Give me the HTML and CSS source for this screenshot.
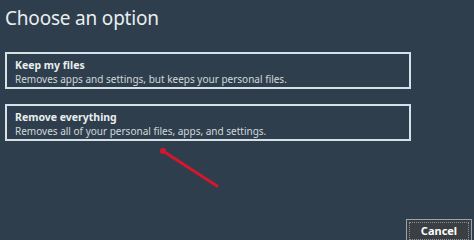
FILE: index.html
```html
<!DOCTYPE html>
<html lang="en">
<head>
    <meta charset="UTF-8">
    <title>Choose an option</title>
    <link rel="stylesheet" href="styles.css">
</head>
<body>
    <div class="screen">
        <h1 class="title">Choose an option</h1>

        <div class="options">
            <div class="option">
                <div class="option-name">Keep my files</div>
                <div class="option-desc">Removes apps and settings, but keeps your personal files.</div>
            </div>
            <div class="option">
                <div class="option-name">Remove everything</div>
                <div class="option-desc">Removes all of your personal files, apps, and settings.</div>
            </div>
        </div>

        <!-- red annotation arrow -->
        <svg class="arrow" width="70" height="45" viewBox="0 0 70 45">
            <line x1="6" y1="5" x2="60" y2="40" stroke="#d3172e" stroke-width="3" stroke-linecap="round"/>
            <circle cx="6" cy="5" r="3" fill="#d3172e"/>
        </svg>

        <div class="footer">
            <button class="btn-cancel"><span>Cancel</span></button>
        </div>
    </div>
</body>
</html>
```

FILE: styles.css
```css
:root {
    --bg-color: #2f3e4c;
    --border-color: #d5e1e6;
    --text-color: #e8eef0;
}

body {
    margin: 0;
    background: var(--bg-color);
    font-family: 'Noto Sans', 'Open Sans', sans-serif;
    color: var(--text-color);
}

.screen {
    position: relative;
    height: 240px;
    padding: 0 0 0 5px;
    box-sizing: border-box;
    overflow: hidden;
}

.title {
    margin: 0;
    padding-top: 3px;
    font-size: 19px;
    font-weight: normal;
    line-height: 30px;
    letter-spacing: -0.2px;
}

.options {
    display: flex;
    flex-direction: column;
    gap: 15px;
    margin-top: 19px;
    width: 406px;
}

.option {
    border: 2px solid var(--border-color);
    padding: 5px 8px 5px;
    height: 37px;
    box-sizing: border-box;
}

.option-name {
    font-weight: bold;
    font-size: 10.5px;
    line-height: 13px;
}

.option-desc {
    font-size: 10px;
    line-height: 14px;
    color: #cfd8dc;
}

.arrow {
    position: absolute;
    left: 157px;
    top: 146px;
}

.footer {
    position: absolute;
    right: 2px;
    bottom: -3px;
}

.btn-cancel {
    background: #3b3f44;
    border: 1px solid #9aa3a8;
    padding: 2px;
    width: 66px;
    height: 24px;
    font-family: inherit;
}

.btn-cancel span {
    display: block;
    border: 1px dotted #8d9499;
    color: #fff;
    font-weight: bold;
    font-size: 11px;
    line-height: 16px;
}
```
